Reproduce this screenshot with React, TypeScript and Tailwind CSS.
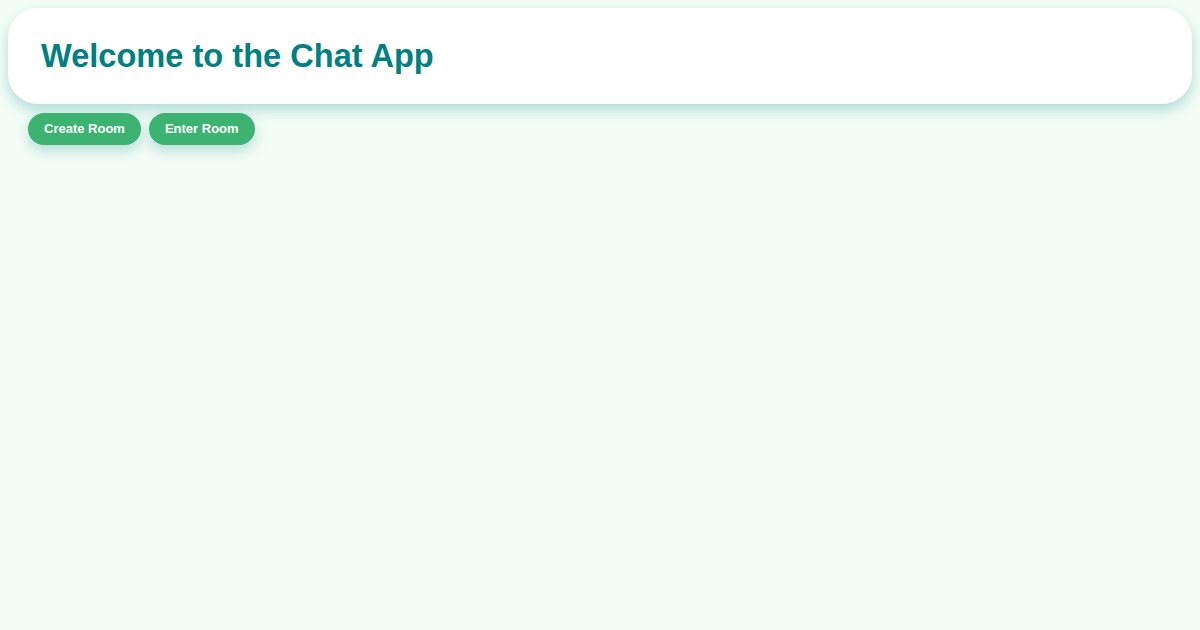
export default function App() {
    return (
        <div
            className="min-h-screen w-full bg-[#f3fdf7] p-2"
            style={{ fontFamily: '"Liberation Sans", Arial, sans-serif' }}
        >
            <header className="flex h-24 items-center rounded-[30px] bg-white px-[33px] shadow-[0_6px_14px_rgba(0,128,128,0.28)]">
                <h1 className="text-[32.6px] font-bold text-[#008080]">
                    Welcome to the Chat App
                </h1>
            </header>

            <div className="flex gap-2 px-5 pt-[9px]">
                <button className="h-8 rounded-full bg-[#3cb371] px-4 text-[13px] font-bold text-white shadow-[0_6px_14px_rgba(0,128,128,0.25)]">
                    Create Room
                </button>
                <button className="h-8 rounded-full bg-[#3cb371] px-4 text-[13px] font-bold text-white shadow-[0_6px_14px_rgba(0,128,128,0.25)]">
                    Enter Room
                </button>
            </div>
        </div>
    );
}
